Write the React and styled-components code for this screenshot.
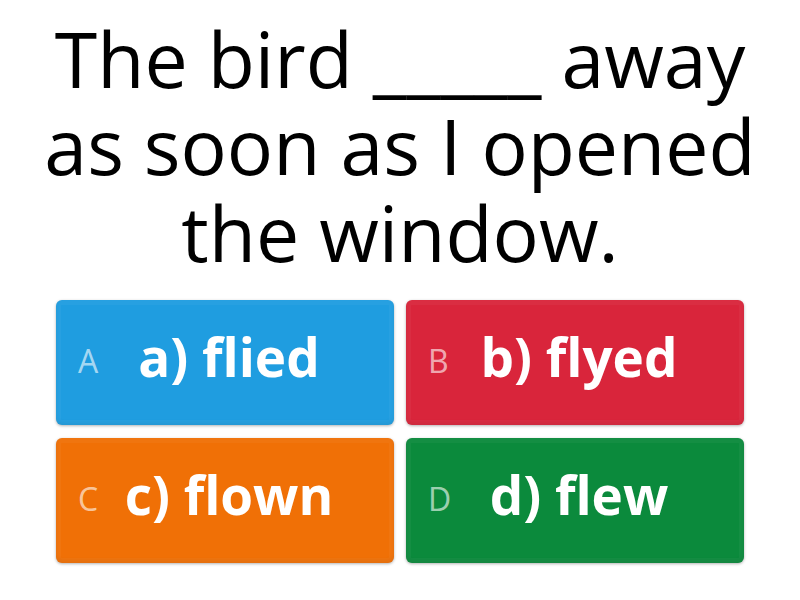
import React from 'react'
import styled, { createGlobalStyle } from 'styled-components'

const GlobalStyle = createGlobalStyle`
  html, body {
    margin: 0;
    padding: 0;
    background: #ffffff;
  }
  body {
    font-family: 'Open Sans', 'Noto Sans', sans-serif;
  }
`

const Page = styled.main`
  width: 800px;
  height: 600px;
  display: flex;
  flex-direction: column;
  align-items: center;
  padding-top: 15px;
  box-sizing: border-box;
`

const Question = styled.h1`
  width: 740px;
  margin: 0;
  font-family: 'Open Sans', sans-serif;
  font-weight: 400;
  font-size: 77px;
  line-height: 87px;
  color: #000;
  text-align: center;
`

const Answers = styled.section`
  margin-top: 24px;
  display: grid;
  grid-template-columns: 338px 338px;
  grid-auto-rows: 125px;
  column-gap: 12px;
  row-gap: 13px;
`

const AnswerButton = styled.button`
  display: flex;
  align-items: center;
  padding: 0 44px 0 22px;
  border: none;
  border-radius: 6px;
  background: ${p => p.$color};
  box-shadow: 0 1px 3px rgba(0, 0, 0, 0.3), inset 0 0 0 5px rgba(255, 255, 255, 0.04),
    inset 0 -3px 4px rgba(0, 0, 0, 0.06);
  color: #fff;
  cursor: pointer;
  font-family: 'Open Sans', sans-serif;
`

const Letter = styled.span`
  width: 30px;
  padding-bottom: 4px;
  font-size: 32px;
  font-weight: 400;
  color: rgba(255, 255, 255, 0.62);
  text-align: left;
`

const AnswerText = styled.span`
  flex: 1;
  padding-bottom: 12px;
  text-align: center;
  font-size: 53px;
  font-weight: 700;
`

const answers = [
  { letter: 'A', text: 'a) flied', color: '#1f9de0' },
  { letter: 'B', text: 'b) flyed', color: '#d9253b' },
  { letter: 'C', text: 'c) flown', color: '#f07006' },
  { letter: 'D', text: 'd) flew', color: '#0b8a3c' }
]

export default function App() {
  return (
    <>
      <GlobalStyle />
      <Page>
        <Question>The bird _____ away as soon as I opened the window.</Question>
        <Answers>
          {answers.map(a => (
            <AnswerButton key={a.letter} $color={a.color}>
              <Letter>{a.letter}</Letter>
              <AnswerText>{a.text}</AnswerText>
            </AnswerButton>
          ))}
        </Answers>
      </Page>
    </>
  )
}
